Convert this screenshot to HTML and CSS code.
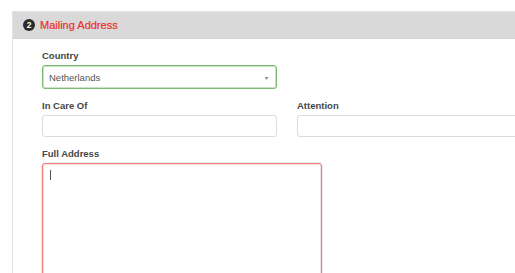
FILE: index.html
```html
<!DOCTYPE html>
<html>
<head>
<meta charset="utf-8">
<link rel="stylesheet" href="styles.css">
</head>
<body>
<div class="panel">
  <div class="panel-head">
    <span class="badge">2</span>
    <span class="title">Mailing Address</span>
  </div>
  <div class="panel-body">
    <div class="row">
      <div class="field">
        <label class="lbl">Country</label>
        <div class="select">
          <span>Netherlands</span>
          <span class="caret">&#9662;</span>
        </div>
      </div>
    </div>
    <div class="row">
      <div class="field">
        <label class="lbl">In Care Of</label>
        <div class="input"></div>
      </div>
      <div class="field">
        <label class="lbl">Attention</label>
        <div class="input open"></div>
      </div>
    </div>
    <div class="row single">
      <div class="field">
        <label class="lbl">Full Address</label>
        <div class="textarea"><span class="cursor"></span></div>
      </div>
    </div>
  </div>
</div>
</body>
</html>
```
FILE: styles.css
```css
html, body {
  margin: 0;
  padding: 0;
  background: #fff;
  font-family: "Liberation Sans", Arial, sans-serif;
}
body {
  height: 273px;
  overflow: hidden;
}
.panel {
  margin: 11px 0 0 12px;
  height: 262px;
  box-sizing: border-box;
  border-top: 1px solid #e2e2e2;
  border-left: 1px solid #e2e2e2;
  overflow: hidden;
}
.panel-head {
  height: 26px;
  background: #d9d9d9;
  border-bottom: 1px solid #d0d0d0;
  display: flex;
  align-items: center;
  padding-left: 10px;
  gap: 5px;
}
.badge {
  width: 12px;
  height: 12px;
  border-radius: 50%;
  background: #2b2b2b;
  color: #fff;
  font-size: 8.5px;
  font-weight: 700;
  display: flex;
  align-items: center;
  justify-content: center;
  line-height: 1;
}
.title {
  color: #ea3029;
  font-size: 11px;
  -webkit-text-stroke: 0.2px #ea3029;
}
.panel-body {
  padding: 10px 0 0 29px;
}
.row {
  display: grid;
  grid-template-columns: 235px 1fr;
  column-gap: 20px;
  margin-bottom: 10px;
}
.row.single {
  grid-template-columns: 280px;
}
.field {
  display: flex;
  flex-direction: column;
}
.lbl {
  font-size: 9.5px;
  font-weight: 700;
  color: #464646;
  line-height: 14px;
  height: 14px;
  margin-bottom: 2px;
}
.select {
  box-sizing: border-box;
  height: 24px;
  border: 1px solid #7cb871;
  border-radius: 3px;
  box-shadow: inset 0 0 0 1px rgba(124,184,113,0.4);
  display: flex;
  align-items: center;
  justify-content: space-between;
  padding: 0 8px 0 6px;
  font-size: 9.5px;
  color: #555;
}
.caret {
  font-size: 6px;
  color: #777;
}
.input {
  box-sizing: border-box;
  height: 22px;
  border: 1px solid #dcdcdc;
  border-radius: 3px;
}
.input.open {
  border-right: none;
  border-radius: 3px 0 0 3px;
}
.textarea {
  box-sizing: border-box;
  height: 140px;
  border: 1px solid #ef7f7a;
  border-radius: 3px;
  box-shadow: 0 0 1px 1px rgba(170,205,240,0.3), inset 0 0 0 0.5px rgba(239,127,122,0.5);
  padding: 6px 0 0 7px;
}
.cursor {
  display: block;
  width: 1px;
  height: 10px;
  background: #555;
}
```
